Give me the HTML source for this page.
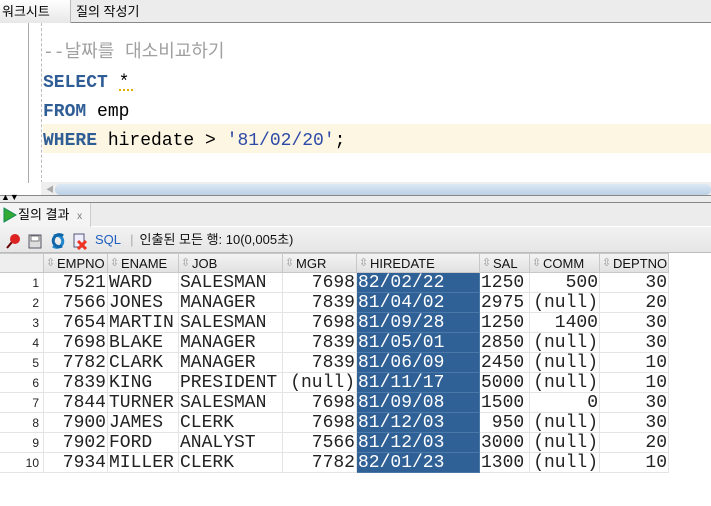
<!DOCTYPE html><html><head><meta charset="utf-8"><style>
*{margin:0;padding:0;box-sizing:border-box}
body{width:711px;height:506px;overflow:hidden;background:#fff;font-family:"Liberation Sans","Noto Sans CJK KR",sans-serif;position:relative}
.a{position:absolute}
.mono{font-family:"Liberation Mono","Noto Sans CJK KR",monospace;font-size:18px}
.code{left:43px;white-space:pre;line-height:20px}
.kw{color:#2f5d96;font-weight:bold}
.row{position:absolute;left:0;height:20px;width:669px}
.c{position:absolute;top:0;height:20px;border-right:1px solid #e4e4e4;border-bottom:1px solid #e4e4e4;white-space:pre;line-height:21px;padding:0 1px;overflow:hidden;color:#222}
.r{text-align:right}
.h{position:absolute;top:0;height:20px;border:1px solid #c8c8c8;border-left:none;background:linear-gradient(#f4f4f4,#e2e2e2);font-size:13px;line-height:19px;padding-left:13px;color:#111}
.h.s:before{content:"⇳";position:absolute;left:2px;top:0;font-size:11px;color:#999}
</style></head><body>
<div class="a" style="left:0;top:0;width:711px;height:23px;background:#ececec;border-bottom:1px solid #888"></div>
<div class="a" style="left:0;top:0;width:71px;height:23px;background:linear-gradient(#fff,#e8e8e8);border-right:1px solid #bbb;font-size:13px;line-height:23px;padding-left:2px">워크시트</div>
<div class="a" style="left:76px;top:0;font-size:13px;line-height:23px">질의 작성기</div>
<div class="a" style="left:28px;top:23px;width:1px;height:160px;background:#aaa"></div>
<div class="a" style="left:41px;top:23px;width:0;height:160px;border-left:1px dashed #bbb"></div>
<div class="a" style="left:43px;top:124px;width:668px;height:29px;background:#fdf6e3"></div>
<div class="a mono code" style="top:43px;color:#a0a0a0">--날짜를 대소비교하기</div>
<div class="a mono code" style="top:73px"><span class="kw">SELECT</span> *</div>
<div class="a" style="left:119px;top:89px;width:14px;height:2px;border-bottom:2px dotted #e0b000"></div>
<div class="a mono code" style="top:102px"><span class="kw">FROM</span> emp</div>
<div class="a mono code" style="top:131px"><span class="kw">WHERE</span> hiredate &gt; <span style="color:#2d4aa8">'81/02/20'</span>;</div>
<div class="a" style="left:41px;top:182px;width:670px;height:14px;background:#eee"></div>
<div class="a" style="left:55px;top:184px;width:656px;height:11px;border-radius:5px;background:linear-gradient(#dce8f4,#bcd0e6)"></div>
<div class="a" style="left:46px;top:184px;font-size:8px;color:#aaa">◀</div>
<div class="a" style="left:0;top:195px;width:711px;height:8px;background:#ececec;border-top:1px solid #888;border-bottom:1px solid #888"></div>
<div class="a" style="left:1px;top:193px;font-size:9px;line-height:9px">▲▼</div>
<div class="a" style="left:0;top:203px;width:711px;height:24px;background:#ececec;border-bottom:1px solid #fff"></div>
<div class="a" style="left:0;top:203px;width:91px;height:24px;background:#f4f4f4;border-right:1px solid #ccc;font-size:13px;line-height:24px;padding-left:18px">질의 결과 <span style="font-size:10px;color:#777;margin-left:4px">x</span></div>
<svg class="a" style="left:2px;top:207px" width="16" height="16"><path d="M2 1L14 8L2 15Z" fill="#3a3" stroke="#185" /></svg>
<div class="a" style="left:0;top:227px;width:711px;height:26px;background:linear-gradient(#f2f2f2,#e6e6e6);border-bottom:1px solid #bbb"></div>
<svg class="a" style="left:4px;top:232px" width="85" height="18">
<path d="M3 16L8 10" stroke="#600" stroke-width="2"/><circle cx="11" cy="7" r="5" fill="#d22"/>
<rect x="25" y="3" width="12" height="13" fill="#ddd" stroke="#556"/><rect x="27" y="4" width="8" height="5" fill="#fff" stroke="#777"/>
<path d="M50 4a6 6 0 1 1 -1 10" stroke="#28c" stroke-width="3" fill="none"/><path d="M58 14a6 6 0 1 1 1-10" stroke="#16a" stroke-width="3" fill="none"/>
<rect x="70" y="2" width="10" height="13" fill="#eef" stroke="#557"/><path d="M74 9l8 8M82 9l-8 8" stroke="#e32" stroke-width="3"/>
</svg>
<div class="a" style="left:95px;top:227px;font-size:13px;line-height:26px;color:#1f5fbf">SQL <span style="color:#aaa;margin:0 6px">|</span><span style="color:#111">인출된 모든 행: 10(0,005초)</span></div>
<div class="a" style="left:0;top:253px;width:711px;height:20px;">
<div class="h" style="left:0;width:44px;background:#eee;padding:0"></div>
<div class="h s" style="left:44px;width:64px">EMPNO</div>
<div class="h s" style="left:108px;width:71px">ENAME</div>
<div class="h s" style="left:179px;width:104px">JOB</div>
<div class="h s" style="left:283px;width:74px">MGR</div>
<div class="h s" style="left:357px;width:123px">HIREDATE</div>
<div class="h s" style="left:480px;width:50px">SAL</div>
<div class="h s" style="left:530px;width:70px">COMM</div>
<div class="h s" style="left:600px;width:69px">DEPTNO</div>
</div>
<div id="g"></div>
<script>
var d=[[7521,"WARD","SALESMAN","7698","82/02/22",1250,"500",30],[7566,"JONES","MANAGER","7839","81/04/02",2975,"(null)",20],[7654,"MARTIN","SALESMAN","7698","81/09/28",1250,"1400",30],[7698,"BLAKE","MANAGER","7839","81/05/01",2850,"(null)",30],[7782,"CLARK","MANAGER","7839","81/06/09",2450,"(null)",10],[7839,"KING","PRESIDENT","(null)","81/11/17",5000,"(null)",10],[7844,"TURNER","SALESMAN","7698","81/09/08",1500,"0",30],[7900,"JAMES","CLERK","7698","81/12/03",950,"(null)",30],[7902,"FORD","ANALYST","7566","81/12/03",3000,"(null)",20],[7934,"MILLER","CLERK","7782","82/01/23",1300,"(null)",10]];
var h="";d.forEach(function(r,i){var t=273+i*20;h+='<div class="row mono" style="top:'+t+'px">'+
'<div class="c r" style="left:0;width:44px;font-family:Liberation Sans,sans-serif;font-size:12px;padding-right:4px;background:#fff">'+(i+1)+'</div>'+
'<div class="c r" style="left:44px;width:64px">'+r[0]+'</div>'+
'<div class="c" style="left:108px;width:71px">'+r[1]+'</div>'+
'<div class="c" style="left:179px;width:104px">'+r[2]+'</div>'+
'<div class="c r" style="left:283px;width:74px">'+r[3]+'</div>'+
'<div class="c" style="left:357px;width:123px;background:#2f6096;color:#fff;border-color:#4a78a8">'+r[4]+'</div>'+
'<div class="c" style="left:480px;width:50px">'+(r[5]<1000?" "+r[5]:r[5])+'</div>'+
'<div class="c r" style="left:530px;width:70px">'+r[6]+'</div>'+
'<div class="c r" style="left:600px;width:69px">'+r[7]+'</div></div>'});
document.getElementById("g").innerHTML=h;
</script>
</body></html>
